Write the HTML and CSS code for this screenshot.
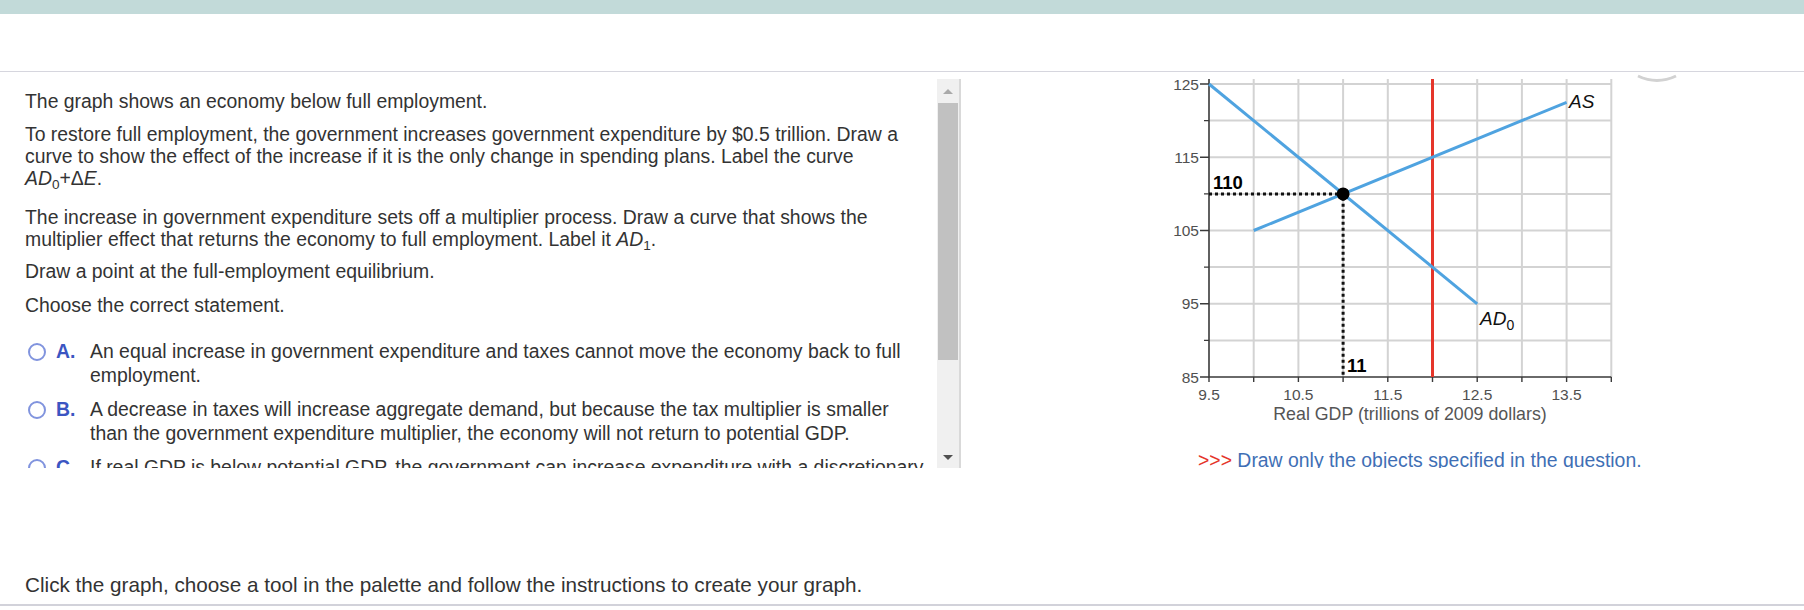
FILE: index.html
```html
<!DOCTYPE html>
<html>
<head>
<meta charset="utf-8">
<link rel="stylesheet" href="styles.css">
</head>
<body>
<div class="topbar"></div>
<div class="header"></div>
<div class="main">
  <div class="left">
    <div class="scroll-content">
      <p class="para gap-a">The graph shows an economy below full employment.</p>
      <p class="para gap-a">To restore full employment, the government increases government expenditure by $0.5 trillion. Draw a curve to show the effect of the increase if it is the only change in spending plans. Label the curve <i>AD</i><sub class="sub">0</sub>+Δ<i>E</i>.</p>
      <p class="para gap-b">The increase in government expenditure sets off a multiplier process. Draw a curve that shows the multiplier effect that returns the economy to full employment. Label it <i>AD</i><sub class="sub">1</sub>.</p>
      <p class="para gap-c">Draw a point at the full-employment equilibrium.</p>
      <p class="para gap-d">Choose the correct statement.</p>
      <div class="option gap-e">
        <span class="radio"></span>
        <span class="opt-label">A.</span>
        <span class="opt-text">An equal increase in government expenditure and taxes cannot move the economy back to full employment.</span>
      </div>
      <div class="option gap-f">
        <span class="radio"></span>
        <span class="opt-label">B.</span>
        <span class="opt-text">A decrease in taxes will increase aggregate demand, but because the tax multiplier is smaller than the government expenditure multiplier, the economy will not return to potential GDP.</span>
      </div>
      <div class="option gap-f">
        <span class="radio"></span>
        <span class="opt-label">C.</span>
        <span class="opt-text">If real GDP is below potential GDP, the government can increase expenditure with a discretionary fiscal policy that restores potential GDP.</span>
      </div>
    </div>
    <div class="scrollbar">
      <div class="sb-up"><span class="arrow-up"></span></div>
      <div class="sb-thumb"></div>
      <div class="sb-track"></div>
      <div class="sb-down"><span class="arrow-down"></span></div>
    </div>
  </div>
  <div class="right">
    <svg class="graph" width="520" height="370" viewBox="0 0 520 370">
      <path class="grid" d="M93.7 0V298M138.4 0V298M183.1 0V298M227.8 0V298M272.5 0V298M317.2 0V298M361.9 0V298M406.6 0V298M451.3 0V298M49 5H451.3M49 41.6H451.3M49 78.3H451.3M49 114.9H451.3M49 151.5H451.3M49 188.1H451.3M49 224.8H451.3M49 261.4H451.3"/>
      <path class="axis" d="M49 0V298H451.3"/>
      <path class="tick" d="M40 5H49M44 41.6H49M40 78.3H49M44 114.9H49M40 151.5H49M44 188.1H49M40 224.8H49M44 261.4H49M40 298H49M49 298V303M93.7 298V303M138.4 298V303M183.1 298V303M227.8 298V303M272.5 298V303M317.2 298V303M361.9 298V303M406.6 298V303M451.3 298V303"/>
      <text class="ylab" x="39" y="10.5">125</text>
      <text class="ylab" x="39" y="83.8">115</text>
      <text class="ylab" x="39" y="157">105</text>
      <text class="ylab" x="39" y="230.3">95</text>
      <text class="ylab" x="39" y="303.5">85</text>
      <text class="xlab" x="49" y="320.5">9.5</text>
      <text class="xlab" x="138.4" y="320.5">10.5</text>
      <text class="xlab" x="227.8" y="320.5">11.5</text>
      <text class="xlab" x="317.2" y="320.5">12.5</text>
      <text class="xlab" x="406.6" y="320.5">13.5</text>
      <text class="xtitle" x="250" y="341">Real GDP (trillions of 2009 dollars)</text>
      <path class="redline" d="M272.5 0V298"/>
      <path class="curve" d="M49 5L317.2 224.8"/>
      <path class="curve" d="M93.7 151.5L406.6 23.3"/>
      <path class="dotted" d="M49 114.9H183.1V298"/>
      <circle class="dot" cx="183.1" cy="114.9" r="6.5"/>
      <text class="vallab" x="53" y="110">110</text>
      <text class="vallab" x="187" y="293">11</text>
      <text class="curvelab" x="409" y="29">AS</text>
      <text class="curvelab" x="320" y="246">AD<tspan class="curvesub" dy="5">0</tspan></text>
      <path class="shadow-arc" d="M478 -3Q497 6 516 -3"/>
    </svg>
    <div class="note"><span class="note-arrows">&gt;&gt;&gt;</span> Draw only the objects specified in the question.</div>
  </div>
</div>
<div class="footer">Click the graph, choose a tool in the palette and follow the instructions to create your graph.</div>
</body>
</html>
```
FILE: styles.css
```css
html, body {
  margin: 0;
  padding: 0;
  background: #ffffff;
}
body {
  font-family: "Liberation Sans", Arial, sans-serif;
  font-size: 19.4px;
  line-height: 22px;
  color: #333333;
  width: 1804px;
  height: 610px;
  overflow: hidden;
}
.topbar {
  height: 14px;
  background: #c2dad9;
}
.header {
  height: 57px;
  border-bottom: 1px solid #d6d6de;
}
.main {
  display: flex;
  padding-top: 7px;
  height: 389px;
}
.left {
  display: flex;
  width: 961px;
  height: 389px;
  flex: none;
}
.scroll-content {
  width: 905px;
  padding-left: 25px;
  height: 389px;
  overflow: hidden;
  flex: none;
}
.para {
  margin: 0;
}
.para i, .para sub {
  font-style: italic;
}
.para .sub {
  font-style: normal;
  font-size: 70%;
  line-height: 0;
  vertical-align: -4px;
}
.gap-a { margin-top: 11px; }
.gap-b { margin-top: 17px; }
.gap-c { margin-top: 10px; }
.gap-d { margin-top: 12px; }
.gap-e { margin-top: 23px; }
.gap-f { margin-top: 10px; }
.option {
  display: flex;
  align-items: flex-start;
  line-height: 24px;
}
.radio {
  flex: none;
  width: 18px;
  height: 18px;
  box-sizing: border-box;
  border: 2px solid #8194de;
  border-radius: 50%;
  margin-left: 3px;
  margin-top: 4px;
}
.opt-label {
  flex: none;
  width: 34px;
  margin-left: 10px;
  font-weight: bold;
  color: #3b55c2;
}
.opt-text {
  flex: 1;
}
.scrollbar {
  flex: none;
  width: 22px;
  margin-left: 7px;
  height: 389px;
  background: #f0f0f0;
  border-right: 2px solid #d9d9d9;
  display: flex;
  flex-direction: column;
}
.sb-up {
  height: 24px;
  display: flex;
  justify-content: center;
  align-items: center;
  flex: none;
}
.sb-down {
  height: 22px;
  display: flex;
  justify-content: center;
  align-items: center;
  flex: none;
}
.arrow-up {
  width: 0;
  height: 0;
  border-left: 5px solid transparent;
  border-right: 5px solid transparent;
  border-bottom: 5px solid #a9a9a9;
}
.arrow-down {
  width: 0;
  height: 0;
  border-left: 5px solid transparent;
  border-right: 5px solid transparent;
  border-top: 5px solid #505050;
}
.sb-thumb {
  flex: none;
  height: 257px;
  margin: 0 1px 0 1px;
  background: #c1c1c1;
}
.sb-track {
  flex: 1;
}
.right {
  display: flex;
  flex-direction: column;
  padding-left: 199px;
}
.graph {
  display: block;
  overflow: visible;
  font-family: "Liberation Sans", Arial, sans-serif;
}
.grid {
  fill: none;
  stroke: #d3d3d3;
  stroke-width: 2;
}
.axis {
  fill: none;
  stroke: #3a3a3a;
  stroke-width: 1.6;
}
.tick {
  fill: none;
  stroke: #3a3a3a;
  stroke-width: 1.4;
}
.ylab {
  font-size: 15.5px;
  fill: #505050;
  text-anchor: end;
}
.xlab {
  font-size: 15.5px;
  fill: #505050;
  text-anchor: middle;
}
.xtitle {
  font-size: 17.8px;
  fill: #555555;
  text-anchor: middle;
}
.redline {
  fill: none;
  stroke: #e5352a;
  stroke-width: 3;
}
.curve {
  fill: none;
  stroke: #4fa3e0;
  stroke-width: 3;
}
.dotted {
  fill: none;
  stroke: #111111;
  stroke-width: 3;
  stroke-dasharray: 3 3;
}
.dot {
  fill: #000000;
}
.vallab {
  font-size: 18.5px;
  font-weight: bold;
  fill: #000000;
}
.curvelab {
  font-size: 19px;
  font-style: italic;
  fill: #111111;
}
.curvesub {
  font-style: normal;
  font-size: 14px;
}
.shadow-arc {
  fill: none;
  stroke: #d2d2d2;
  stroke-width: 3;
}
.note {
  padding-left: 38px;
  height: 19px;
  overflow: hidden;
  line-height: 22px;
  color: #3f6fb5;
  white-space: nowrap;
}
.note-arrows {
  color: #e5352a;
}
.footer {
  margin-top: 106px;
  padding-left: 25px;
  padding-bottom: 8px;
  font-size: 20.7px;
  line-height: 22px;
  border-bottom: 2px solid #d2d2da;
}
```
